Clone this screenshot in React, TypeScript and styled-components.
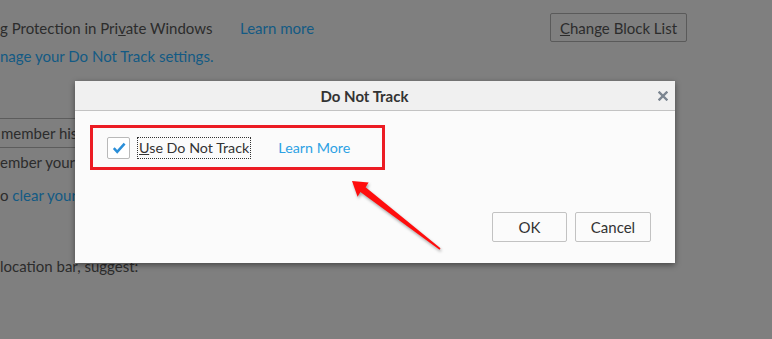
import React from "react";
import styled, { createGlobalStyle } from "styled-components";

const Global = createGlobalStyle`
  html, body { margin: 0; padding: 0; }
  body {
    background: #7f7f7f;
    font-family: Lato, "Open Sans", sans-serif;
    width: 772px;
    height: 339px;
    overflow: hidden;
  }
`;

const Page = styled.div`
  position: relative;
  width: 772px;
  height: 339px;
  overflow: hidden;
  background: #7f7f7f;
  padding-top: 13px;
  box-sizing: border-box;
  color: #2c2c2c;
  font-size: 15px;
`;

const Row = styled.div<{ $top?: number }>`
  display: flex;
  align-items: center;
  margin-top: ${(p) => p.$top ?? 0}px;
  line-height: 20px;
  white-space: nowrap;
`;

const Text = styled.span<{ $w?: number }>`
  color: #2c2c2c;
  ${(p) => (p.$w ? `width: ${p.$w}px; flex: none;` : "")}
`;

const BgLink = styled.span`
  color: #135a84;
`;

const BgButton = styled.div`
  margin-left: auto;
  margin-right: 85px;
  width: 137px;
  height: 29px;
  box-sizing: border-box;
  border: 1px solid #5a5a5a;
  border-radius: 2px;
  display: flex;
  align-items: center;
  justify-content: center;
  color: #2c2c2c;
`;

const MenuList = styled.div`
  margin-top: 52px;
  margin-left: -10px;
  width: 220px;
  height: 30px;
  box-sizing: border-box;
  border: 1px solid #5c5c5c;
  padding-left: 10px;
  display: flex;
  align-items: center;
  white-space: nowrap;
`;

const Dialog = styled.div`
  position: absolute;
  left: 75px;
  top: 81px;
  width: 600px;
  height: 182px;
  display: flex;
  flex-direction: column;
  background: #fbfbfb;
  box-shadow: 0 2px 6px rgba(0, 0, 0, 0.45);
`;

const Header = styled.div`
  height: 29px;
  flex: none;
  display: flex;
  align-items: center;
  background: #f0f0f0;
  border-bottom: 1px solid #c3c3c3;
`;

const Title = styled.div`
  flex: 1;
  text-align: center;
  font-weight: 700;
  font-size: 15px;
  color: #333;
`;

const Close = styled.div`
  width: 18px;
  margin-right: 3px;
  display: flex;
  align-items: center;
  justify-content: center;
`;

const Body = styled.div`
  flex: 1;
  display: flex;
  flex-direction: column;
  padding: 14px 24px 21px 15px;
`;

const Highlight = styled.div`
  width: 295px;
  height: 45px;
  box-sizing: border-box;
  border: 3px solid #ec1c24;
  display: flex;
  align-items: center;
  padding-left: 14px;
`;

const Check = styled.div`
  width: 23px;
  height: 22px;
  box-sizing: border-box;
  border: 1px solid #b9b9b9;
  border-radius: 2px;
  background: #fff;
  display: flex;
  align-items: center;
  justify-content: center;
`;

const CheckLabel = styled.span`
  margin-left: 8px;
  padding: 0 1px;
  outline: 1px dotted #333;
  line-height: 20px;
  color: #333;
  font-size: 14.3px;
`;

const Accel = styled.span`
  text-decoration: underline;
`;

const DlgLink = styled.span`
  margin-left: 28px;
  color: #2da2e4;
  font-size: 14.3px;
`;

const Buttons = styled.div`
  margin-top: auto;
  display: flex;
  justify-content: flex-end;
  gap: 8px;
`;

const DlgButton = styled.div<{ $w: number }>`
  width: ${(p) => p.$w}px;
  height: 30px;
  box-sizing: border-box;
  border: 1px solid #c2c2c2;
  border-radius: 2px;
  background: #fbfbfb;
  display: flex;
  align-items: center;
  justify-content: center;
  color: #333;
  font-size: 15px;
`;

const Arrow = styled.svg`
  position: absolute;
  left: 0;
  top: 0;
  filter: drop-shadow(1px 2px 1.5px rgba(0, 0, 0, 0.35));
  pointer-events: none;
`;

export default function App() {
  return (
    <>
      <Global />
      <Page>
        <Row>
          <Text $w={240}>g Protection in Pri<Accel>v</Accel>ate Windows</Text>
          <BgLink>Learn more</BgLink>
          <BgButton>
            <span>
              <Accel>C</Accel>hange Block List
            </span>
          </BgButton>
        </Row>
        <Row $top={4}>
          <BgLink>nage your Do Not Track settings.</BgLink>
        </Row>
        <MenuList>member history</MenuList>
        <Row $top={4}>
          <Text>ember your</Text>
        </Row>
        <Row $top={13}>
          <Text>o&nbsp;</Text>
          <BgLink>clear your</BgLink>
        </Row>
        <Row $top={51}>
          <Text>location bar, suggest:</Text>
        </Row>

        <Dialog>
          <Header>
            <Title>Do Not Track</Title>
            <Close>
              <svg width="10" height="10" viewBox="0 0 10 10">
                <path d="M1.5 1.5 L8.5 8.5 M8.5 1.5 L1.5 8.5" stroke="#7b8590" strokeWidth="2.4" strokeLinecap="square" />
              </svg>
            </Close>
          </Header>
          <Body>
            <Highlight>
              <Check>
                <svg width="14" height="12" viewBox="0 0 14 12">
                  <path d="M1.8 6.2 L5.2 9.8 L12.6 1.6" fill="none" stroke="#2a8ed8" strokeWidth="2.5" />
                </svg>
              </Check>
              <CheckLabel>
                <Accel>U</Accel>se Do Not Track
              </CheckLabel>
              <DlgLink>Learn More</DlgLink>
            </Highlight>
            <Buttons>
              <DlgButton $w={75}>OK</DlgButton>
              <DlgButton $w={76}>Cancel</DlgButton>
            </Buttons>
          </Body>
        </Dialog>

        <Arrow width="772" height="339" viewBox="0 0 772 339">
          <polygon
            points="352,181 368.6,182.5 365.6,187.2 440.5,248.3 439.5,249.7 360.4,191.9 357.6,196.7"
            fill="#ff0d0d"
          />
        </Arrow>
      </Page>
    </>
  );
}
